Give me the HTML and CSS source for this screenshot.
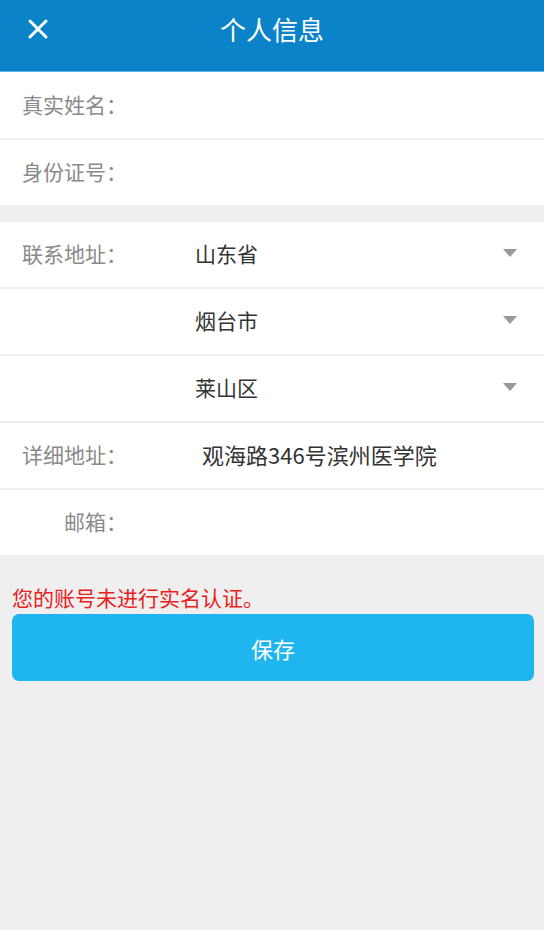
FILE: index.html
```html
<!DOCTYPE html>
<html lang="zh-CN">
<head>
<meta charset="utf-8">
<title>个人信息</title>
<link rel="stylesheet" href="styles.css">
</head>
<body>
<header class="topbar">
  <div class="close">
    <svg width="20" height="20" viewBox="0 0 20 20"><path d="M2 2 L18 18 M18 2 L2 18" stroke="#fff" stroke-width="3" stroke-linecap="round"/></svg>
  </div>
  <h1 class="title">个人信息</h1>
  <div class="spacer"></div>
</header>

<section class="group first">
  <div class="row tall"><span class="label">真实姓名：</span></div>
  <div class="row last"><span class="label">身份证号：</span></div>
</section>

<section class="group second">
  <div class="row"><span class="label">联系地址：</span><span class="value">山东省</span><span class="caret"></span></div>
  <div class="row"><span class="label"></span><span class="value">烟台市</span><span class="caret"></span></div>
  <div class="row"><span class="label"></span><span class="value">莱山区</span><span class="caret"></span></div>
  <div class="row"><span class="label">详细地址：</span><span class="value detail">观海路346号滨州医学院</span></div>
  <div class="row"><span class="label">邮箱：</span></div>
</section>

<p class="warn">您的账号未进行实名认证。</p>
<div class="btnwrap"><button class="save">保存</button></div>
</body>
</html>
```

FILE: styles.css
```css
html, body {
  margin: 0;
  padding: 0;
}
body {
  width: 544px;
  min-height: 930px;
  background: #efefef;
  font-family: "Noto Sans CJK SC", "Noto Sans", sans-serif;
}
.topbar {
  height: 71px;
  background: #0b83c9;
  border-bottom: 1px solid #62b2e2;
  display: grid;
  grid-template-columns: 80px 1fr 80px;
  align-items: center;
}
.close {
  padding-left: 28px;
  display: flex;
  align-items: center;
  height: 20px;
  margin-top: -13px;
}
.close svg { display: block; }
.title {
  margin: 0;
  text-align: center;
  color: #fff;
  font-weight: normal;
  font-size: 26px;
  line-height: 1;
  margin-top: -13px;
}
.group {
  background: #fff;
}
.second {
  margin-top: 17px;
}
.row {
  height: 62px;
  padding-bottom: 3px;
  border-bottom: 2px solid #eeeeee;
  display: flex;
  align-items: center;
}
.row.tall {
  height: 63px;
}
.row.last {
  border-bottom: 0;
}
.label {
  width: 105px;
  margin-left: 22px;
  text-align: right;
  color: #8a8a8a;
  font-size: 21px;
  flex: none;
}
.value {
  margin-left: 68px;
  color: #333;
  font-size: 21px;
  flex: 1;
}
.value.detail {
  padding-left: 7px;
  font-size: 22px;
}
.caret {
  width: 0;
  height: 0;
  border-left: 7px solid transparent;
  border-right: 7px solid transparent;
  border-top: 8px solid #999;
  margin-right: 27px;
}
.warn {
  margin: 25px 0 0 12px;
  color: #e8211d;
  font-size: 21px;
  line-height: 30px;
}
.btnwrap {
  padding: 2px 10px 0 12px;
}
.save {
  display: block;
  width: 100%;
  height: 67px;
  border: 0;
  border-radius: 7px;
  background: #1fb6ef;
  color: #fff;
  font-family: "Noto Sans CJK SC", "Noto Sans", sans-serif;
  font-size: 22px;
}
```
